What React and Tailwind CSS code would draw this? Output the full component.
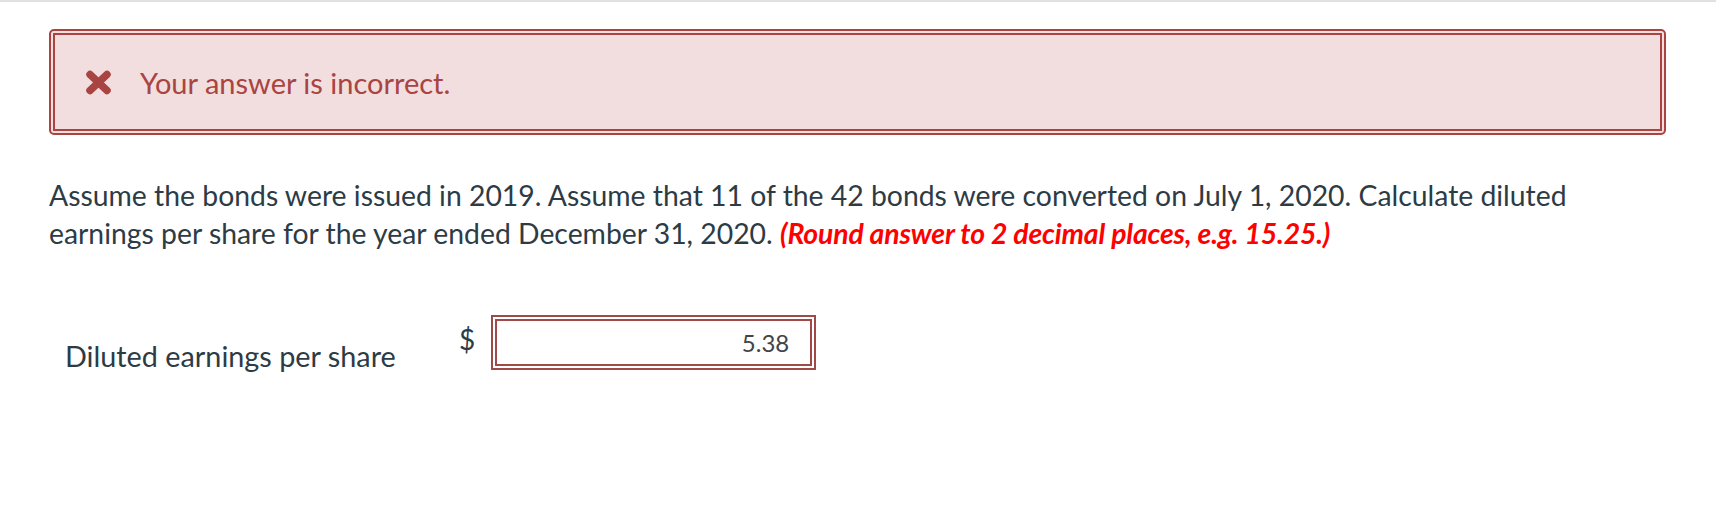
import React from "react";

export default function App() {
  return (
    <div className="w-[1716px] h-[512px] bg-white overflow-hidden" style={{ fontFamily: "Lato, 'Open Sans', sans-serif" }}>
      <div className="h-[2px] bg-[#e1e1e1]" />
      <div className="pt-[27px] pl-[49px] pr-[50px]">
        <div className="rounded-[5px] border-2 border-[#a94442] bg-[#f6dede] p-[2px]">
          <div className="h-[98px] border-2 border-[#a94442] bg-[#f2dede] flex items-center pl-[30px]">
            <svg width="27" height="25" viewBox="0 0 27 25" className="shrink-0">
              <path d="M5 4.5 L22 20.5 M22 4.5 L5 20.5" stroke="#a94442" strokeWidth="7.5" strokeLinecap="round" fill="none" />
            </svg>
            <span className="ml-[28px] text-[29px] text-[#a94442] leading-none">Your answer is incorrect.</span>
          </div>
        </div>
        <p className="mt-[41px] w-[1545px] text-[28.35px] leading-[38px] text-[#2d3b45]">
          Assume the bonds were issued in 2019. Assume that 11 of the 42 bonds were converted on July 1, 2020. Calculate diluted earnings per share for the year ended December 31, 2020.{" "}
          <span className="font-bold italic text-[#ff0000] tracking-[-0.15px]">(Round answer to 2 decimal places, e.g. 15.25.)</span>
        </p>
        <div className="mt-[63px] flex items-start">
          <div className="pl-[16px] w-[410px] pt-[27px] text-[28.8px] text-[#2d3b45] leading-none">Diluted earnings per share</div>
          <div className="pt-[10px] text-[28px] text-[#2d3b45] leading-none">$</div>
          <div className="ml-[16px] w-[325px] h-[55px] border-2 border-[#a14848] p-[2px] bg-white">
            <div className="h-full border-2 border-[#a14848] flex items-center justify-end pr-[21px] text-[24px] text-[#444444]">
              5.38
            </div>
          </div>
        </div>
      </div>
    </div>
  );
}
